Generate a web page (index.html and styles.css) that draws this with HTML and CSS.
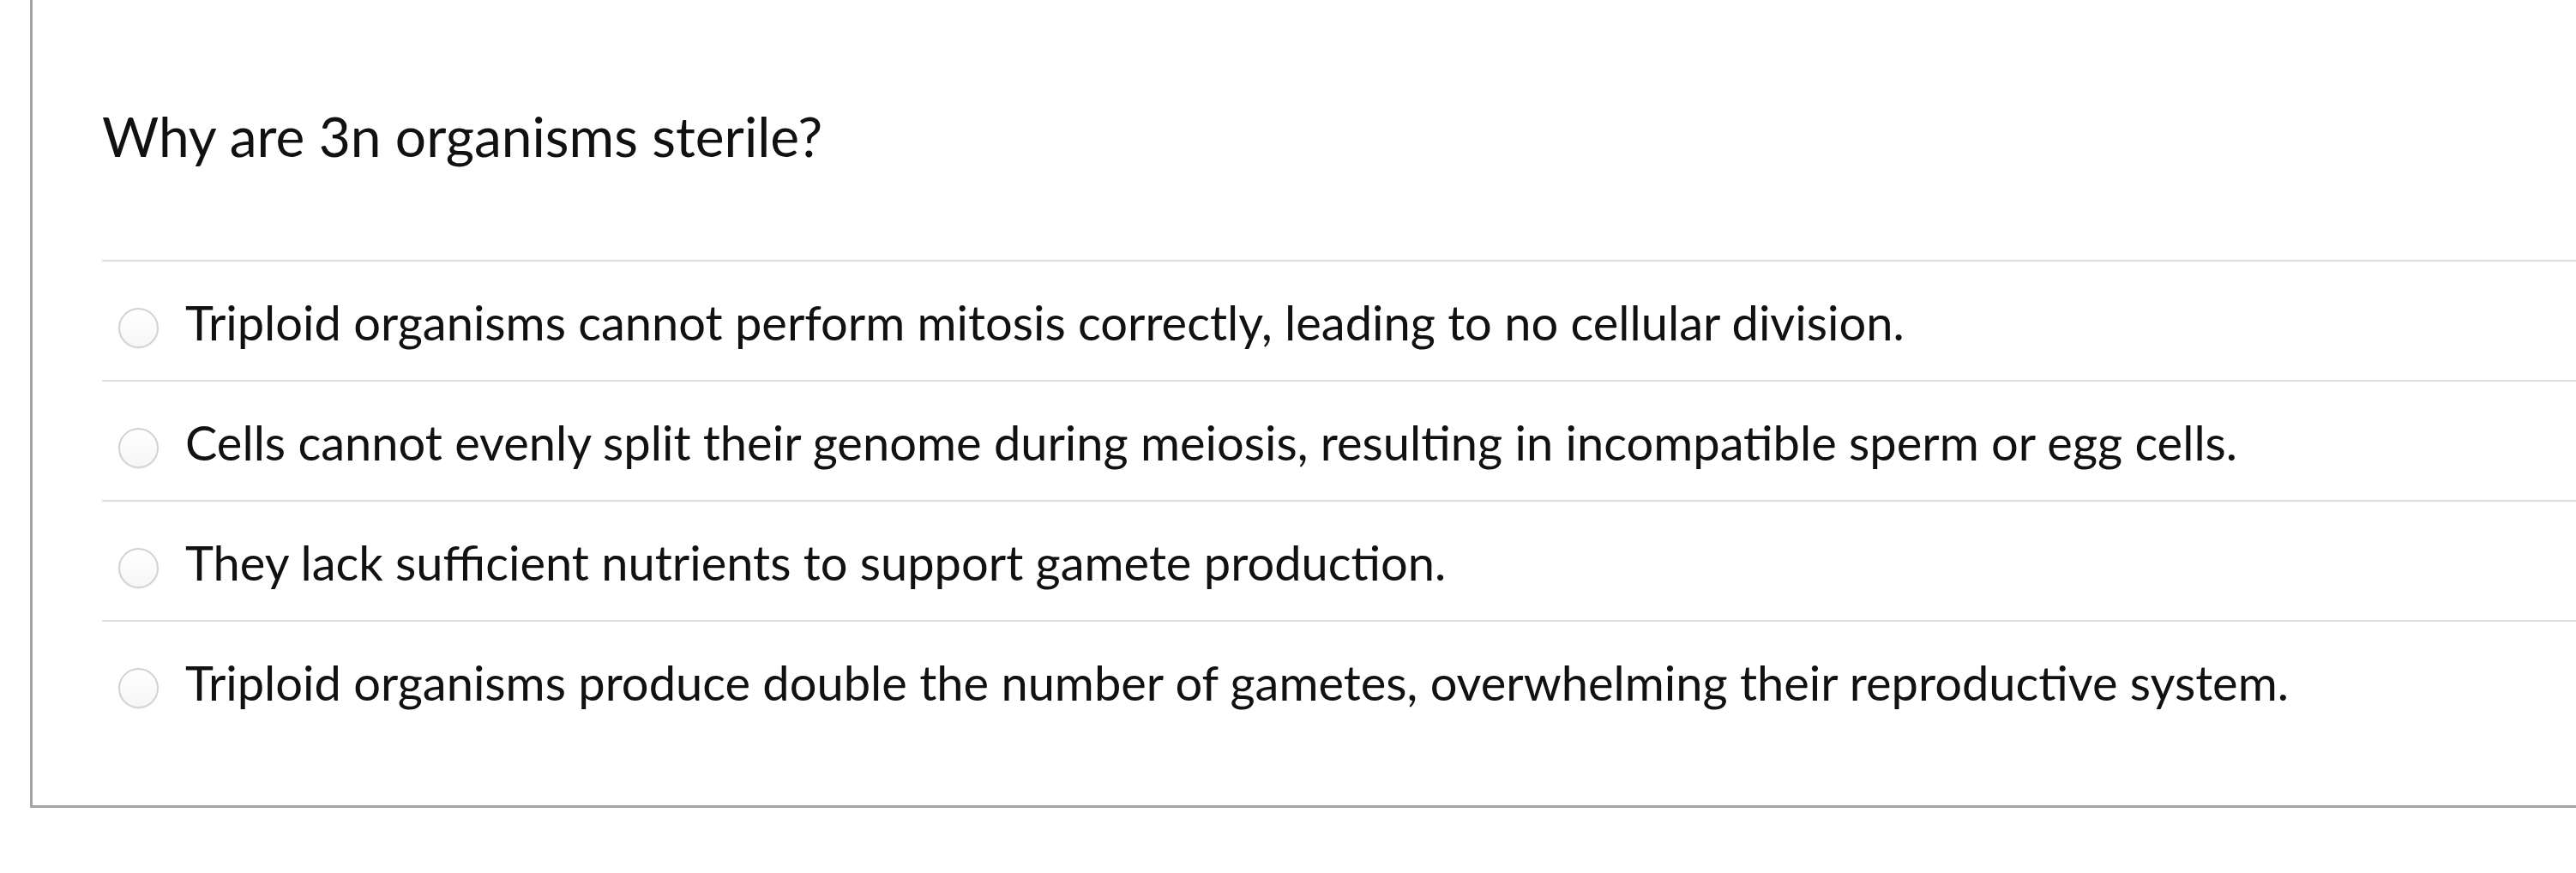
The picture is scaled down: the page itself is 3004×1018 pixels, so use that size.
FILE: index.html
```html
<!DOCTYPE html>
<html lang="en">
<head>
<meta charset="utf-8">
<title>Quiz question</title>
<link rel="stylesheet" href="styles.css">
</head>
<body>
  <div class="question">
    <div class="question-text">Why are 3n organisms sterile?</div>
    <div class="answers">
      <label class="answer"><span class="radio"></span><span class="answer-text">Triploid organisms cannot perform mitosis correctly, leading to no cellular division.</span></label>
      <label class="answer"><span class="radio"></span><span class="answer-text">Cells cannot evenly split their genome during meiosis, resulting in incompatible sperm or egg cells.</span></label>
      <label class="answer"><span class="radio"></span><span class="answer-text">They lack sufficient nutrients to support gamete production.</span></label>
      <label class="answer"><span class="radio"></span><span class="answer-text">Triploid organisms produce double the number of gametes, overwhelming their reproductive system.</span></label>
    </div>
  </div>
</body>
</html>
```
FILE: styles.css
```css
html, body {
  margin: 0;
  padding: 0;
  background: #ffffff;
}

body {
  width: 3004px;
  height: 1018px;
  overflow: hidden;
  font-family: Lato, "Open Sans", "Liberation Sans", sans-serif;
  color: #111111;
}

.question {
  margin-left: 35px;
  height: 942px;
  box-sizing: border-box;
  border-left: 3px solid #a3a3a3;
  border-bottom: 3px solid #a3a3a3;
  padding: 121px 0 0 81px;
}

.question-text {
  font-size: 64px;
  line-height: 1.2;
  margin-bottom: 105px;
}

.answers {
  display: flex;
  flex-direction: column;
}

.answer {
  display: flex;
  align-items: center;
  height: 140px;
  box-sizing: border-box;
  border-top: 2px solid #dedede;
  padding-left: 19px;
}

.radio {
  flex: 0 0 auto;
  width: 47px;
  height: 47px;
  box-sizing: border-box;
  border-radius: 50%;
  border: 2px solid #d2d2d2;
  background: linear-gradient(#ffffff, #f6f6f6);
  box-shadow: 0 1px 1px rgba(0, 0, 0, 0.06);
  margin-top: 17px;
  margin-right: 31px;
}

.answer-text {
  font-size: 56px;
  line-height: 84px;
  padding-top: 4px;
}
```
